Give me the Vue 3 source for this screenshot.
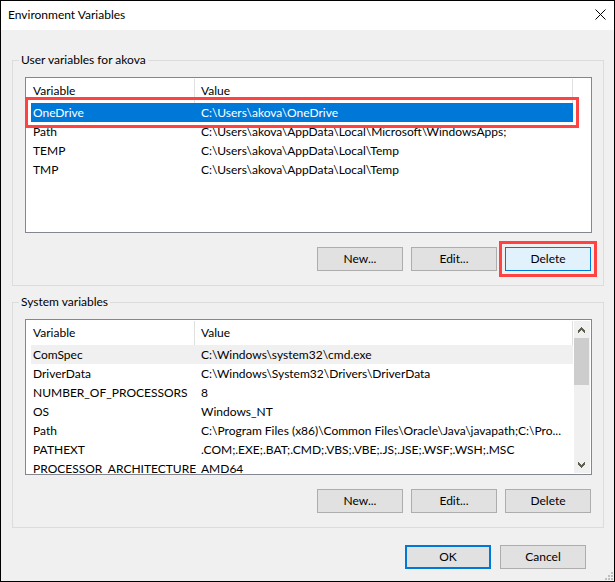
<template>
  <main class="dialog">
    <header class="titlebar">
      <h1 class="title">Environment Variables</h1>
      <button class="close" type="button" aria-label="Close">
        <svg width="11" height="11" viewBox="0 0 11 11" aria-hidden="true">
          <path d="M0.5 0.5 L10.5 10.5 M10.5 0.5 L0.5 10.5" stroke="#000" stroke-width="1" fill="none" />
        </svg>
      </button>
    </header>

    <fieldset v-for="group in groups" :key="group.id" class="group">
      <legend>{{ group.title }}</legend>

      <div class="list" :class="{ scrollable: group.scrollable }">
        <table>
          <thead>
            <tr>
              <th class="name" scope="col">Variable</th>
              <th scope="col">Value</th>
            </tr>
          </thead>
          <tbody>
            <tr
              v-for="row in group.rows"
              :key="row.name"
              :class="{ selected: row.name === group.selected, inactive: row.name === group.inactive }"
            >
              <td>{{ row.name }}</td>
              <td>{{ row.value }}</td>
            </tr>
          </tbody>
        </table>

        <div class="scrollbar">
          <template v-if="group.scrollable">
            <button class="arrow" type="button" aria-label="Scroll up">
              <svg width="7" height="6" viewBox="0 0 7 6" aria-hidden="true">
                <path d="M3 0h1v1h1v1h1v1h1v3h-1v-1h-1v-1h-1v-1h-1v1h-1v1h-1v1h-1v-3h1v-1h1v-1h1z" fill="#606050" />
              </svg>
            </button>
            <div class="thumb"></div>
            <button class="arrow down" type="button" aria-label="Scroll down">
              <svg width="7" height="6" viewBox="0 0 7 6" aria-hidden="true">
                <path d="M3 6h1v-1h1v-1h1v-1h1v-3h-1v1h-1v1h-1v1h-1v-1h-1v-1h-1v-1h-1v3h1v1h1v1h1z" fill="#606050" />
              </svg>
            </button>
          </template>
        </div>
      </div>

      <div class="actions">
        <button class="btn" type="button">New...</button>
        <button class="btn" type="button">Edit...</button>
        <button class="btn" :class="{ hot: group.selected }" type="button">Delete</button>
      </div>
    </fieldset>

    <footer class="footer">
      <button class="btn default" type="button">OK</button>
      <button class="btn" type="button">Cancel</button>
    </footer>

    <svg class="grip" width="9" height="9" viewBox="0 0 9 9" aria-hidden="true">
      <path d="M6 0h2v2h-2z M3 3h2v2h-2z M6 3h2v2h-2z M0 6h2v2h-2z M3 6h2v2h-2z M6 6h2v2h-2z" fill="#bfbfbf" />
    </svg>
  </main>
</template>

<script setup>
import { ref } from 'vue'

const groups = ref([
  {
    id: 'user',
    title: 'User variables for akova',
    selected: 'OneDrive',
    scrollable: false,
    rows: [
      { name: 'OneDrive', value: 'C:\\Users\\akova\\OneDrive' },
      { name: 'Path', value: 'C:\\Users\\akova\\AppData\\Local\\Microsoft\\WindowsApps;' },
      { name: 'TEMP', value: 'C:\\Users\\akova\\AppData\\Local\\Temp' },
      { name: 'TMP', value: 'C:\\Users\\akova\\AppData\\Local\\Temp' }
    ]
  },
  {
    id: 'system',
    title: 'System variables',
    inactive: 'ComSpec',
    scrollable: true,
    rows: [
      { name: 'ComSpec', value: 'C:\\Windows\\system32\\cmd.exe' },
      { name: 'DriverData', value: 'C:\\Windows\\System32\\Drivers\\DriverData' },
      { name: 'NUMBER_OF_PROCESSORS', value: '8' },
      { name: 'OS', value: 'Windows_NT' },
      { name: 'Path', value: 'C:\\Program Files (x86)\\Common Files\\Oracle\\Java\\javapath;C:\\Pro...' },
      { name: 'PATHEXT', value: '.COM;.EXE;.BAT;.CMD;.VBS;.VBE;.JS;.JSE;.WSF;.WSH;.MSC' },
      { name: 'PROCESSOR_ARCHITECTURE', value: 'AMD64' }
    ]
  }
])
</script>

<style scoped>
.dialog {
  position: relative;
  box-sizing: border-box;
  border: 1px solid #000;
  background: #f0f0f0;
  color: #000;
  font-family: "Segoe UI", Lato, "Open Sans", sans-serif;
  font-size: 12px;
  line-height: 16px;
}

.titlebar {
  display: flex;
  align-items: center;
  justify-content: space-between;
  height: 29px;
  margin-bottom: 22px;
  padding: 0 8px 2px 7px;
  box-sizing: border-box;
  background: #fff;
}

.title {
  margin: 0;
  font-size: 12px;
  font-weight: 400;
}

.close {
  display: flex;
  padding: 0;
  border: 0;
  background: none;
}

.group {
  min-width: 0;
  margin: 0 10px 8px 11px;
  padding: 9px 11px 14px 12px;
  border: 1px solid #dcdcdc;
}

.group legend {
  margin-left: -6px;
  padding: 0 2px;
}

.list {
  display: flex;
  box-sizing: border-box;
  height: 156px;
  padding: 1px 1px 1px 5px;
  border: 1px solid #828790;
  background: #fff;
}

.list.scrollable {
  overflow: hidden;
}

table {
  flex: 1;
  align-self: flex-start;
  width: 100%;
  min-width: 0;
  border-collapse: separate;
  border-spacing: 0;
  table-layout: fixed;
}

th,
td {
  height: 19px;
  padding: 0 0 0 6px;
  line-height: 19px;
  text-align: left;
  white-space: nowrap;
}

th {
  height: 24px;
  padding-bottom: 2px;
  border-right: 1px solid #e0e0e0;
  box-sizing: border-box;
  font-weight: 400;
}

th.name {
  width: 164px;
}

th:first-child,
td:first-child {
  padding-left: 2px;
}

tr.selected {
  background: #0078d7;
  color: #fff;
  outline: 3px solid #ff4343;
  outline-offset: 3px;
}

tr.inactive {
  background: #f0f0f0;
}

.scrollbar {
  display: flex;
  flex: none;
  flex-direction: column;
  width: 16px;
  margin-left: 1px;
}

.scrollable .scrollbar {
  background: #f0f0f0;
}

.arrow {
  display: flex;
  align-items: center;
  justify-content: center;
  width: 15px;
  height: 17px;
  padding: 0;
  border: 0;
  background: none;
}

.arrow.down {
  margin-top: auto;
}

.thumb {
  width: 15px;
  height: 47px;
  background: #cdcdcd;
}

.actions {
  display: flex;
  justify-content: flex-end;
  gap: 8px;
  margin-top: 14px;
  padding-right: 1px;
}

.btn {
  box-sizing: border-box;
  width: 86px;
  height: 24px;
  padding: 0;
  border: 1px solid #adadad;
  background: #e1e1e1;
  color: #000;
  font: inherit;
}

.btn.default {
  border: 2px solid #0078d7;
}

.btn.hot {
  border-color: #0078d7;
  background: #e1f2fc;
  outline: 3px solid #ff4343;
  outline-offset: 3px;
}

.footer {
  display: flex;
  justify-content: flex-end;
  gap: 9px;
  padding: 9px 28px 12px;
}

.grip {
  position: absolute;
  right: 0;
  bottom: 0;
}
</style>

<style>
body {
  margin: 0;
  background: #f0f0f0;
}
</style>
